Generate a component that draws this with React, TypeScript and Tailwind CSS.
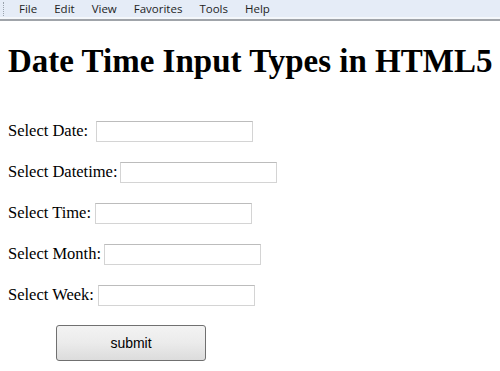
import React from "react";

const rows = [
  { label: "Select Date:", w: "w-[88px]" },
  { label: "Select Datetime:", w: "w-[112px]" },
  { label: "Select Time:", w: "w-[87px]" },
  { label: "Select Month:", w: "w-[96px]" },
  { label: "Select Week:", w: "w-[90px]" },
];

export default function App() {
  return (
    <div className="w-[500px] h-[371px] bg-white overflow-hidden">
      <div className="h-[21px] flex flex-col">
        <div className="h-[17px] bg-[#e5ecf7] flex items-center relative">
          <div className="absolute left-[3px] top-[2px] h-[14px] border-l-[1px] border-dotted border-[#9aa3ad]" />
          <div className="flex gap-[17px] pl-[19px] text-[11.5px] text-[#1e1e1e] leading-none" style={{ fontFamily: '"Open Sans", "Noto Sans", sans-serif' }}>
            <span>File</span>
            <span>Edit</span>
            <span>View</span>
            <span>Favorites</span>
            <span>Tools</span>
            <span>Help</span>
          </div>
        </div>
        <div className="h-[2px] bg-[#f4f7fb]" />
        <div className="h-[2px] bg-[#a0a4aa]" />
      </div>
      <div className="px-[8px]" style={{ fontFamily: '"Liberation Serif", "Times New Roman", serif' }}>
        <h1 className="mt-[22px] text-[33px] font-bold leading-[37px] text-black whitespace-nowrap">Date Time Input Types in HTML5</h1>
        <div className="mt-[41px] flex flex-col gap-[20px]">
          {rows.map((r) => (
            <div key={r.label} className="flex items-center h-[21px] text-[16.5px] text-black">
              <span className={`${r.w} whitespace-nowrap`}>{r.label}</span>
              <div className="w-[157px] h-[21px] border border-[#d4d4d4] border-t-[#bcbcbc] bg-white" />
            </div>
          ))}
        </div>
        <div className="mt-[19px] ml-[48px]">
          <button className="w-[150px] h-[36px] rounded-[3px] border border-[#707070] bg-gradient-to-b from-[#f3f3f3] via-[#ebebeb] to-[#dcdcdc] text-[14px] text-black" style={{ fontFamily: '"Liberation Sans", Arial, sans-serif' }}>
            submit
          </button>
        </div>
      </div>
    </div>
  );
}
